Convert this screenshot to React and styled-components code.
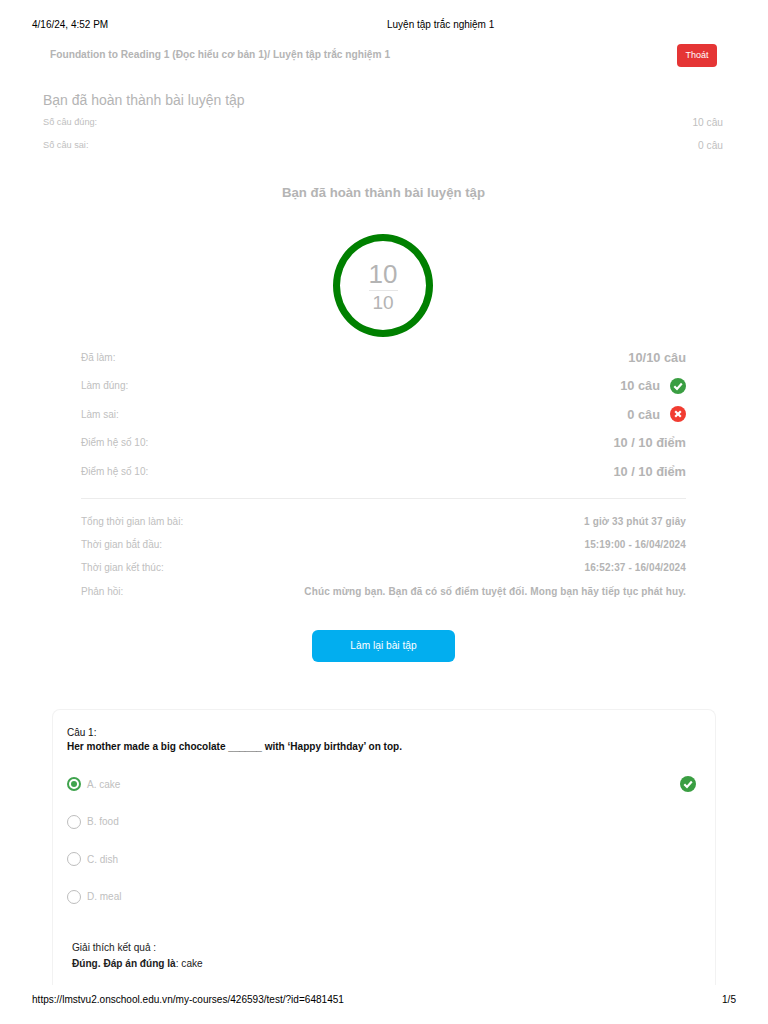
import React from 'react';
import styled, { createGlobalStyle } from 'styled-components';

const GlobalStyle = createGlobalStyle`
  html, body {
    margin: 0;
    padding: 0;
    background: #fff;
    font-family: "Liberation Sans", Arial, sans-serif;
  }
`;

const GRAY = '#b4b4b4';
const LIGHT = '#c0c0c0';

const Page = styled.div`
  width: 768px;
  height: 1024px;
  overflow: hidden;
  display: flex;
  flex-direction: column;
  position: relative;
  background: #fff;
`;

const PrintHeader = styled.header`
  display: grid;
  grid-template-columns: 355px 1fr;
  height: 12px;
  margin-top: 19px;
  padding: 0 32px;
  font-size: 10px;
  line-height: 12px;
  color: #000;
`;

const TopBar = styled.div`
  display: flex;
  align-items: center;
  justify-content: space-between;
  height: 23px;
  margin-top: 13px;
  padding: 0 51px 0 50px;
`;

const Crumb = styled.div`
  font-size: 10.2px;
  line-height: 21px;
  height: 23px;
  font-weight: 700;
  color: ${GRAY};
`;

const ExitButton = styled.button`
  width: 40px;
  height: 23px;
  padding: 0 0 1px;
  border: 0;
  border-radius: 4px;
  background: #e53535;
  color: #fff;
  font: 400 9px "Liberation Sans", Arial, sans-serif;
`;

const Summary = styled.section`
  margin-top: 23px;
  padding: 0 45px 0 43px;
`;

const SummaryTitle = styled.h2`
  margin: 0 0 5px;
  font-size: 14px;
  line-height: 20px;
  font-weight: 400;
  color: ${GRAY};
`;

const SummaryRow = styled.div`
  display: flex;
  justify-content: space-between;
  height: 23px;
  font-size: 9.2px;
  line-height: 15px;
  color: ${LIGHT};
`;

const SummaryValue = styled.span`
  font-size: 10.2px;
`;

const ResultTitle = styled.h1`
  margin: 22px 0 0;
  padding-right: 1px;
  text-align: center;
  font-size: 13.2px;
  line-height: 20px;
  font-weight: 700;
  color: ${GRAY};
`;

const Ring = styled.div`
  box-sizing: border-box;
  width: 100px;
  height: 103px;
  margin: 31px 0 0 333px;
  padding-top: 3px;
  border: 7px solid #008000;
  border-radius: 50%;
  display: flex;
  flex-direction: column;
  align-items: center;
  justify-content: center;
  color: ${GRAY};
`;

const RingTop = styled.div`
  width: 29px;
  height: 30px;
  box-sizing: border-box;
  border-bottom: 1px solid #e6e6e6;
  text-align: center;
  font-size: 26px;
  line-height: 26px;
`;

const RingBottom = styled.div`
  font-size: 19px;
  line-height: 23px;
`;

const Stats = styled.section`
  margin: 6px 82px 0 81px;
`;

const StatRow = styled.div`
  display: flex;
  align-items: center;
  justify-content: space-between;
  height: 28.5px;
  font-size: 10px;
  color: ${LIGHT};
`;

const StatValue = styled.div`
  display: flex;
  align-items: center;
  gap: 10px;
  font-size: 12.8px;
  font-weight: 700;
  color: ${GRAY};
`;

const Divider = styled.hr`
  margin: 12px 0 11px;
  border: 0;
  border-top: 1px solid #ececec;
`;

const TimeRow = styled.div`
  display: flex;
  align-items: center;
  justify-content: space-between;
  height: 23.3px;
  font-size: 10px;
  color: ${LIGHT};
`;

const TimeValue = styled.div`
  font-size: 10px;
  font-weight: 700;
  color: ${GRAY};
  letter-spacing: 0.12px;
`;

const Retry = styled.button`
  display: block;
  width: 143px;
  height: 32px;
  margin: 27px 0 0 312px;
  padding: 0;
  border: 0;
  border-radius: 6px;
  background: #02aeef;
  color: #fff;
  font: 400 10.2px "Liberation Sans", Arial, sans-serif;
`;

const Card = styled.article`
  box-sizing: border-box;
  height: 276px;
  margin: 47px 52px 0;
  padding: 15px 19px 0 14px;
  border: 1px solid #f2f2f2;
  border-bottom: 0;
  border-radius: 8px 8px 0 0;
`;

const QuestionNo = styled.div`
  font-size: 10px;
  line-height: 15px;
  color: #111;
`;

const QuestionText = styled.div`
  font-size: 10.05px;
  line-height: 14px;
  font-weight: 700;
  color: #111;
`;

const Options = styled.div`
  margin-top: 12px;
`;

const Option = styled.div`
  display: flex;
  align-items: center;
  gap: 6px;
  height: 37.5px;
  font-size: 10px;
  color: ${LIGHT};
`;

const Radio = styled.span`
  box-sizing: border-box;
  flex: none;
  width: 14px;
  height: 14px;
  border-radius: 50%;
  border: ${({ $checked }) => ($checked ? '2px solid #3fa34d' : '1.5px solid #bdbdbd')};
  display: flex;
  align-items: center;
  justify-content: center;

  &::after {
    content: '';
    display: ${({ $checked }) => ($checked ? 'block' : 'none')};
    width: 6px;
    height: 6px;
    border-radius: 50%;
    background: #3fa34d;
  }
`;

const OptionMark = styled.span`
  display: flex;
  margin-left: auto;
`;

const Explain = styled.div`
  margin: 24px 0 0 5px;
  font-size: 10.1px;
  line-height: 16px;
  color: #222;
`;

const PrintFooter = styled.footer`
  display: flex;
  justify-content: space-between;
  height: 12px;
  margin-top: 9px;
  padding: 0 32px;
  font-size: 10.05px;
  line-height: 12px;
  color: #000;
`;

const CheckBadge = ({ size = 16 }) => (
  <svg width={size} height={size} viewBox="0 0 16 16" aria-hidden="true">
    <circle cx="8" cy="8" r="8" fill="#3a9e42" />
    <path d="M4.3 8.3 7 11 11.8 5.6" fill="none" stroke="#fff" strokeWidth="2.2" />
  </svg>
);

const CrossBadge = ({ size = 16 }) => (
  <svg width={size} height={size} viewBox="0 0 16 16" aria-hidden="true">
    <circle cx="8" cy="8" r="8" fill="#f13c31" />
    <path d="M5.2 5.2 10.8 10.8M10.8 5.2 5.2 10.8" fill="none" stroke="#fff" strokeWidth="2.2" />
  </svg>
);

const stats = [
  { label: 'Đã làm:', value: '10/10 câu' },
  { label: 'Làm đúng:', value: '10 câu', icon: <CheckBadge /> },
  { label: 'Làm sai:', value: '0 câu', icon: <CrossBadge /> },
  { label: 'Điểm hệ số 10:', value: '10 / 10 điểm' },
  { label: 'Điểm hệ số 10:', value: '10 / 10 điểm' },
];

const times = [
  { label: 'Tổng thời gian làm bài:', value: '1 giờ 33 phút 37 giây' },
  { label: 'Thời gian bắt đầu:', value: '15:19:00 - 16/04/2024' },
  { label: 'Thời gian kết thúc:', value: '16:52:37 - 16/04/2024' },
  { label: 'Phản hồi:', value: 'Chúc mừng bạn. Bạn đã có số điểm tuyệt đối. Mong bạn hãy tiếp tục phát huy.' },
];

const options = ['A. cake', 'B. food', 'C. dish', 'D. meal'];

const App = () => (
  <Page>
    <GlobalStyle />
    <PrintHeader>
      <span>4/16/24, 4:52 PM</span>
      <span>Luyện tập trắc nghiệm 1</span>
    </PrintHeader>
    <TopBar>
      <Crumb>Foundation to Reading 1 (Đọc hiểu cơ bản 1)/ Luyện tập trắc nghiệm 1</Crumb>
      <ExitButton>Thoát</ExitButton>
    </TopBar>
    <Summary>
      <SummaryTitle>Bạn đã hoàn thành bài luyện tập</SummaryTitle>
      <SummaryRow><span>Số câu đúng:</span><SummaryValue>10 câu</SummaryValue></SummaryRow>
      <SummaryRow><span>Số câu sai:</span><SummaryValue>0 câu</SummaryValue></SummaryRow>
    </Summary>
    <ResultTitle>Bạn đã hoàn thành bài luyện tập</ResultTitle>
    <Ring>
      <RingTop>10</RingTop>
      <RingBottom>10</RingBottom>
    </Ring>
    <Stats>
      {stats.map((row, i) => (
        <StatRow key={i}>
          <span>{row.label}</span>
          <StatValue>{row.value}{row.icon}</StatValue>
        </StatRow>
      ))}
      <Divider />
      {times.map((row) => (
        <TimeRow key={row.label}>
          <span>{row.label}</span>
          <TimeValue>{row.value}</TimeValue>
        </TimeRow>
      ))}
    </Stats>
    <Retry>Làm lại bài tập</Retry>
    <Card>
      <QuestionNo>Câu 1:</QuestionNo>
      <QuestionText>Her mother made a big chocolate ______ with ‘Happy birthday’ on top.</QuestionText>
      <Options>
        {options.map((text, i) => (
          <Option key={text}>
            <Radio $checked={i === 0} />
            <span>{text}</span>
            {i === 0 && <OptionMark><CheckBadge /></OptionMark>}
          </Option>
        ))}
      </Options>
      <Explain>
        <div>Giải thích kết quả :</div>
        <div><b>Đúng. Đáp án đúng là</b>: cake</div>
      </Explain>
    </Card>
    <PrintFooter>
      <span>https://lmstvu2.onschool.edu.vn/my-courses/426593/test/?id=6481451</span>
      <span>1/5</span>
    </PrintFooter>
  </Page>
);

export default App;
